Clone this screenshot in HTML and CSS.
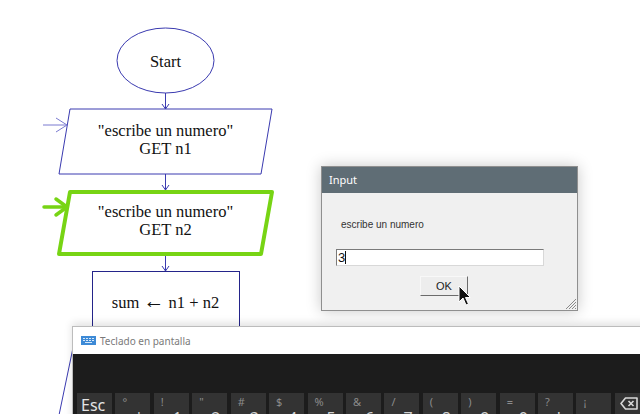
FILE: index.html
```html
<!DOCTYPE html>
<html>
<head>
<meta charset="utf-8">
<link rel="stylesheet" href="styles.css">
</head>
<body>
<div class="desktop">
  <svg class="flowchart" width="640" height="414" viewBox="0 0 640 414">
    <ellipse cx="165.5" cy="60.5" rx="48.5" ry="32.5" fill="#fff" stroke="#3a3ab0" stroke-width="1"/>
    <text x="165.5" y="67" class="fc-text" text-anchor="middle">Start</text>
    <g stroke="#3a3ab0" stroke-width="1" fill="none">
      <line x1="165.5" y1="93" x2="165.5" y2="109"/>
      <polyline points="162,104 165.5,109 169,104"/>
      <line x1="165.5" y1="174" x2="165.5" y2="190"/>
      <polyline points="162,185 165.5,190 169,185"/>
      <line x1="165.5" y1="256" x2="165.5" y2="271"/>
      <polyline points="162,266 165.5,271 169,266"/>
      <polygon points="70,109 272,109 261,174 59,174" fill="#fff"/>
      <line x1="74" y1="343" x2="58" y2="420"/>
    </g>
    <g stroke="#7a7ad0" stroke-width="1" fill="none">
      <line x1="43" y1="125" x2="67" y2="125"/>
      <polyline points="56,118 67,125 56,132"/>
    </g>
    <text x="165.5" y="136" class="fc-text" text-anchor="middle">"escribe un numero"</text>
    <text x="165.5" y="154" class="fc-text" text-anchor="middle">GET n1</text>

    <polygon points="70,192 272,192 261,254 59,254" fill="#fff" stroke="#77d414" stroke-width="4" stroke-linejoin="round"/>
    <g stroke="#77d414" stroke-width="3.5" fill="none" stroke-linecap="round" stroke-linejoin="round">
      <line x1="44" y1="207" x2="66" y2="207"/>
      <polyline points="56,199 67,207 56,215"/>
    </g>
    <text x="165.5" y="217" class="fc-text" text-anchor="middle">"escribe un numero"</text>
    <text x="165.5" y="235" class="fc-text" text-anchor="middle">GET n2</text>

    <rect x="92.5" y="271.5" width="147" height="90" fill="#fff" stroke="#24248a" stroke-width="1"/>
    <text x="165.5" y="308" class="fc-text" text-anchor="middle">sum <tspan class="fc-arrow">←</tspan> n1 + n2</text>
  </svg>

  <div class="dialog">
    <div class="dialog-title">Input</div>
    <div class="dialog-body">
      <div class="dialog-label">escribe un numero</div>
      <div class="dialog-input"><span class="input-value">3</span><span class="caret"></span></div>
      <div class="dialog-button">OK</div>
    </div>
    <svg class="grip" width="12" height="12" viewBox="0 0 12 12">
      <g stroke="#8a8a8a" stroke-width="1">
        <line x1="11" y1="1" x2="1" y2="11"/>
        <line x1="11" y1="4" x2="4" y2="11"/>
        <line x1="11" y1="7" x2="7" y2="11"/>
        <line x1="11" y1="10" x2="10" y2="11"/>
      </g>
    </svg>
  </div>

  <svg class="cursor" width="14" height="23" viewBox="0 0 14 23">
    <path d="M1 1 L1 17 L5 13 L8 20 L10.5 19 L7.5 12.5 L12.5 12.5 Z" fill="#111" stroke="#fff" stroke-width="1" stroke-linejoin="round"/>
  </svg>

  <div class="osk">
    <div class="osk-title">
      <svg class="osk-icon" width="15" height="9" viewBox="0 0 15 9">
        <rect x="0" y="0" width="15" height="9" fill="#3d8ad6"/>
        <g fill="#d6e8fa">
          <rect x="2" y="2" width="2" height="1"/><rect x="5" y="2" width="2" height="1"/><rect x="8" y="2" width="2" height="1"/><rect x="11" y="2" width="2" height="1"/>
          <rect x="2" y="4" width="2" height="1"/><rect x="5" y="4" width="2" height="1"/><rect x="8" y="4" width="2" height="1"/><rect x="11" y="4" width="2" height="1"/>
          <rect x="4" y="6" width="7" height="1"/>
        </g>
      </svg>
      <span class="osk-title-text">Teclado en pantalla</span>
    </div>
    <div class="osk-body">
      <div class="key-row">
        <div class="key key-esc">Esc</div>
        <div class="key"><span class="sec">°</span><span class="main">|</span></div>
        <div class="key"><span class="sec">!</span><span class="main">1</span></div>
        <div class="key"><span class="sec">"</span><span class="main">2</span></div>
        <div class="key"><span class="sec">#</span><span class="main">3</span></div>
        <div class="key"><span class="sec">$</span><span class="main">4</span></div>
        <div class="key"><span class="sec">%</span><span class="main">5</span></div>
        <div class="key"><span class="sec">&amp;</span><span class="main">6</span></div>
        <div class="key"><span class="sec">/</span><span class="main">7</span></div>
        <div class="key"><span class="sec">(</span><span class="main">8</span></div>
        <div class="key"><span class="sec">)</span><span class="main">9</span></div>
        <div class="key"><span class="sec">=</span><span class="main">0</span></div>
        <div class="key"><span class="sec">?</span><span class="main">'</span></div>
        <div class="key"><span class="sec">¡</span><span class="main">¿</span></div>
        <div class="key key-back">
          <svg width="18" height="13" viewBox="0 0 18 13">
            <path d="M5.5 1 L17 1 L17 12 L5.5 12 L1 6.5 Z" fill="none" stroke="#d8d8d8" stroke-width="1.6" stroke-linejoin="round"/>
            <path d="M8.5 4 L13.5 9 M13.5 4 L8.5 9" stroke="#d8d8d8" stroke-width="1.6"/>
          </svg>
        </div>
      </div>
    </div>
  </div>
</div>
</body>
</html>
```

FILE: styles.css
```css
html, body {
  margin: 0;
  padding: 0;
  background: #ffffff;
}

.desktop {
  position: relative;
  width: 640px;
  height: 414px;
  overflow: hidden;
  background: #ffffff;
}

.flowchart {
  position: absolute;
  left: 0;
  top: 0;
}

.fc-text {
  font-family: "Liberation Serif", "Times New Roman", serif;
  font-size: 16.5px;
  fill: #111111;
}

.fc-arrow {
  font-family: "Liberation Serif", "Times New Roman", serif;
  font-size: 21px;
}

/* Input dialog window */
.dialog {
  position: absolute;
  left: 321px;
  top: 166px;
  width: 255px;
  height: 143px;
  border: 1px solid #8f8f8f;
  background: #f0f0f0;
  box-shadow: 0 0 14px rgba(0, 0, 0, 0.22);
  display: flex;
  flex-direction: column;
  font-family: "Liberation Sans", Arial, sans-serif;
}

.dialog-title {
  height: 26px;
  line-height: 26px;
  background: #5f6d75;
  color: #ffffff;
  font-family: "Noto Sans", "Liberation Sans", sans-serif;
  font-size: 11px;
  padding-left: 7px;
}

.dialog-body {
  display: flex;
  flex-direction: column;
  align-items: flex-start;
  padding-left: 14px;
}

.dialog-label {
  margin-top: 26px;
  margin-left: 5px;
  font-size: 10px;
  line-height: 12px;
  color: #333333;
}

.dialog-input {
  margin-top: 18px;
  width: 205px;
  height: 15px;
  background: #ffffff;
  border-top: 1px solid #7a7a7a;
  border-left: 1px solid #7a7a7a;
  border-right: 1px solid #d8d8d8;
  border-bottom: 1px solid #d8d8d8;
  display: flex;
  align-items: center;
  font-size: 13px;
  color: #111;
  padding-left: 1px;
  box-sizing: content-box;
}

.input-value {
  line-height: 14px;
}

.caret {
  width: 1px;
  height: 13px;
  background: #111;
}

.dialog-button {
  margin-top: 10px;
  margin-left: 84px;
  width: 46px;
  height: 18px;
  line-height: 18px;
  text-align: center;
  font-size: 11px;
  color: #222;
  background: #ededed;
  border-top: 1px solid #f8f8f8;
  border-left: 1px solid #f8f8f8;
  border-right: 1px solid #6b6b6b;
  border-bottom: 1px solid #6b6b6b;
}

.grip {
  position: absolute;
  right: 0;
  bottom: 0;
}

.cursor {
  position: absolute;
  left: 458px;
  top: 285px;
}

/* On-screen keyboard window */
.osk {
  position: absolute;
  left: 72px;
  top: 326px;
  width: 600px;
  height: 120px;
  border-top: 1px solid #bcbcbc;
  border-left: 1px solid #bcbcbc;
  box-shadow: 0 -3px 8px rgba(0, 0, 0, 0.12);
  display: flex;
  flex-direction: column;
}

.osk-title {
  height: 27px;
  background: #ffffff;
  display: flex;
  align-items: center;
  padding-left: 8px;
  gap: 4px;
}

.osk-icon {
  display: block;
}

.osk-title-text {
  font-family: "Noto Sans", "Open Sans", sans-serif;
  font-size: 10px;
  color: #7a7a7a;
}

.osk-body {
  flex: 1;
  background: #1c1c1c;
  padding-top: 39px;
  padding-left: 4px;
}

.key-row {
  display: flex;
  gap: 3.43px;
}

.key {
  width: 35px;
  height: 40px;
  flex: none;
  background: #333333;
  box-sizing: border-box;
  padding: 3px 0 0 7px;
  font-family: "Noto Sans", "Open Sans", sans-serif;
  display: flex;
  flex-direction: column;
}

.sec {
  font-size: 11px;
  line-height: 12px;
  color: #8c8c8c;
}

.main {
  font-size: 16px;
  line-height: 16px;
  color: #d0d0d0;
  margin-left: 12px;
  margin-top: 2px;
}

.key-esc {
  padding: 2px 0 0 4px;
  font-size: 16px;
  line-height: 20px;
  color: #e4e4e4;
}

.key-back {
  padding: 4px 0 0 5px;
}
```
